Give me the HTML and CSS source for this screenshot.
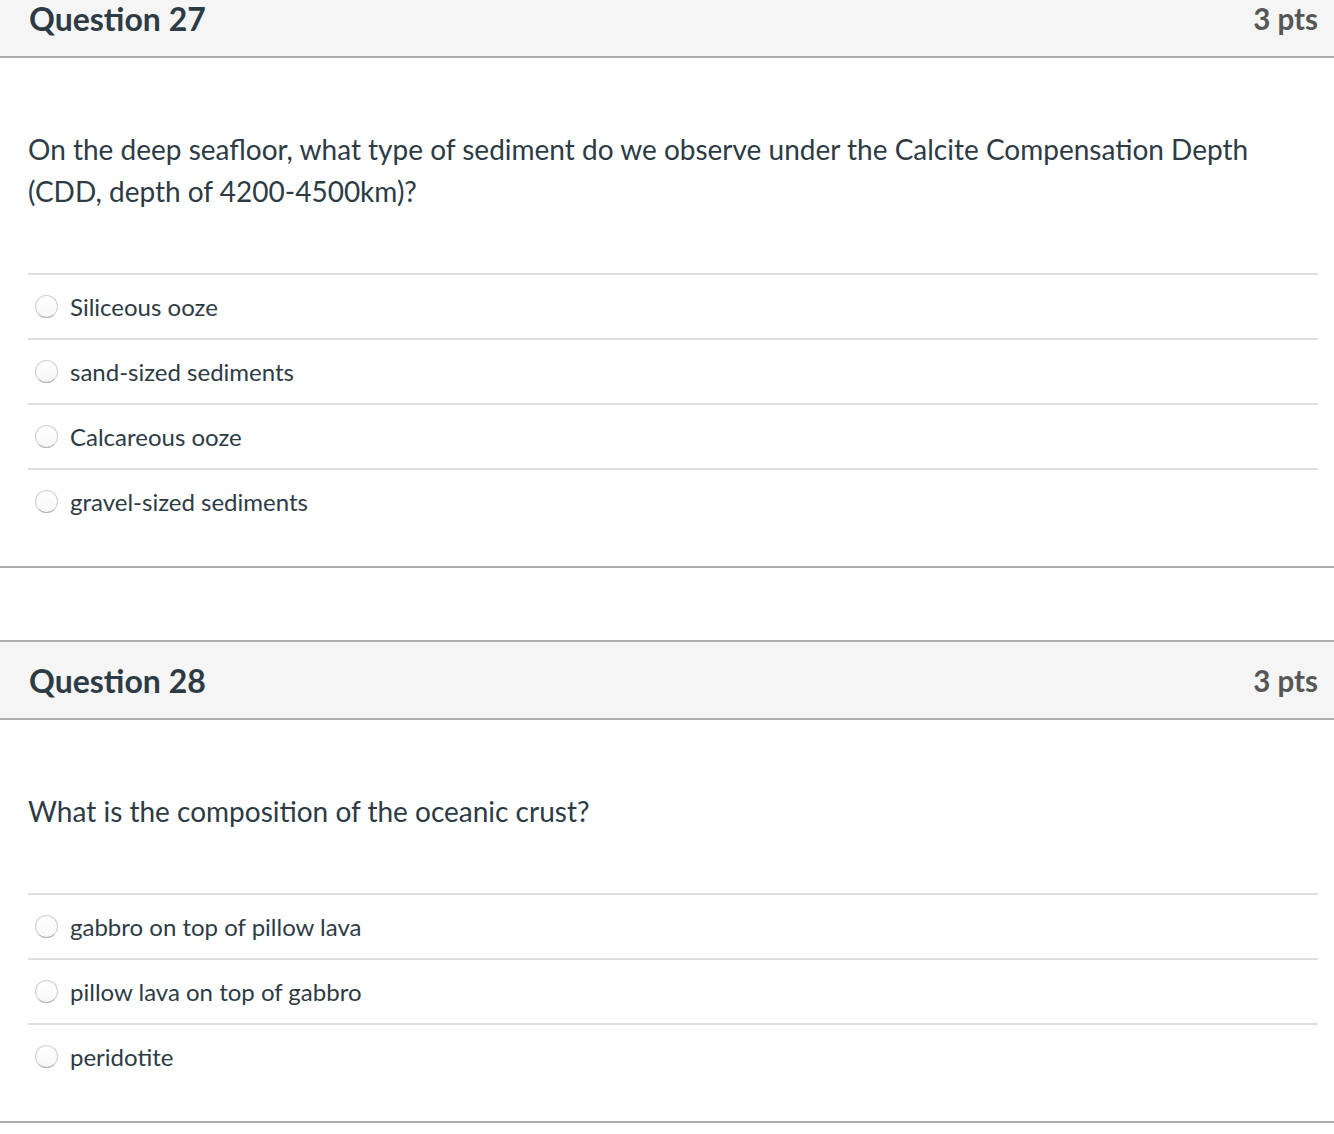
FILE: index.html
```html
<!DOCTYPE html>
<html>
<head>
<meta charset="utf-8">
<link rel="stylesheet" href="styles.css">
</head>
<body>
<div class="quiz">
  <section class="question first">
    <header class="q-header">
      <h2 class="q-title">Question 27</h2>
      <span class="q-pts">3 pts</span>
    </header>
    <div class="q-body">
      <p class="q-text">On the deep seafloor, what type of sediment do we observe under the Calcite Compensation Depth (CDD, depth of 4200-4500km)?</p>
      <ul class="answers">
        <li class="answer"><span class="radio"></span><span class="label">Siliceous ooze</span></li>
        <li class="answer"><span class="radio"></span><span class="label">sand-sized sediments</span></li>
        <li class="answer"><span class="radio"></span><span class="label">Calcareous ooze</span></li>
        <li class="answer"><span class="radio"></span><span class="label">gravel-sized sediments</span></li>
      </ul>
    </div>
  </section>
  <section class="question">
    <header class="q-header">
      <h2 class="q-title">Question 28</h2>
      <span class="q-pts">3 pts</span>
    </header>
    <div class="q-body">
      <p class="q-text">What is the composition of the oceanic crust?</p>
      <ul class="answers">
        <li class="answer"><span class="radio"></span><span class="label">gabbro on top of pillow lava</span></li>
        <li class="answer"><span class="radio"></span><span class="label">pillow lava on top of gabbro</span></li>
        <li class="answer"><span class="radio"></span><span class="label">peridotite</span></li>
      </ul>
    </div>
  </section>
</div>
</body>
</html>
```

FILE: styles.css
```css
html, body {
  margin: 0;
  padding: 0;
  background: #ffffff;
}
body {
  font-family: Lato, "Liberation Sans", sans-serif;
  color: #2d3b45;
}
.quiz {
  display: flex;
  flex-direction: column;
  gap: 72px;
}
.question {
  border-top: 2px solid #adadad;
  border-bottom: 2px solid #adadad;
}
.question.first {
  margin-top: -22px;
}
.q-header {
  display: flex;
  justify-content: space-between;
  align-items: center;
  height: 76px;
  padding: 0 16px 0 29px;
  background: #f5f5f5;
  border-bottom: 2px solid #adadad;
}
.q-title {
  margin: 0;
  font-size: 32px;
  font-weight: 700;
  color: #2d3b45;
}
.q-pts {
  font-size: 29.5px;
  font-weight: 700;
  color: #565656;
}
.q-body {
  padding: 70px 16px 33px 28px;
}
.q-text {
  margin: 0;
  font-size: 28px;
  line-height: 42px;
  color: #2d3b45;
  max-width: 1250px;
}
.answers {
  list-style: none;
  margin: 61px 0 0 0;
  padding: 0;
}
.answer {
  display: flex;
  align-items: center;
  gap: 12px;
  height: 63px;
  border-top: 2px solid #dedede;
  padding-left: 7px;
}
.radio {
  width: 21px;
  height: 21px;
  border-radius: 50%;
  border: 1px solid #d0d0d0;
  border-bottom-color: #b4b4b4;
  background: linear-gradient(#ffffff, #f7f7f7);
  box-sizing: content-box;
  flex: none;
}
.label {
  font-size: 24px;
  color: #2d3b45;
}
```
